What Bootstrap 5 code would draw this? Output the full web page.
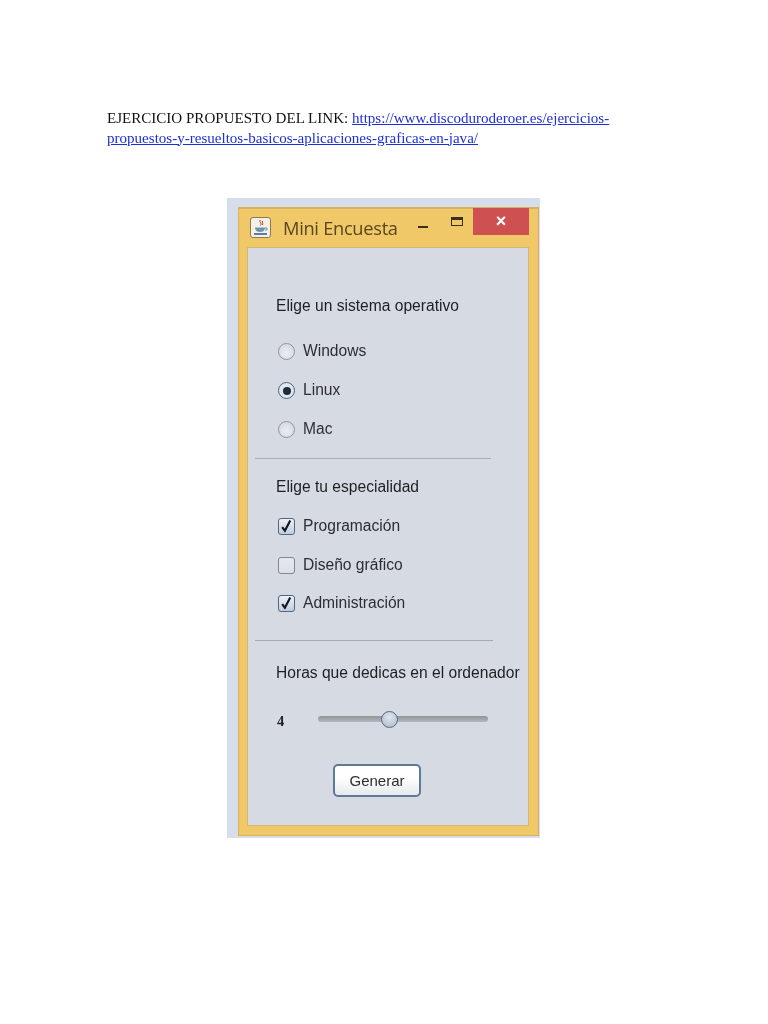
<!DOCTYPE html>
<html lang="es">
<head>
<meta charset="utf-8">
<title>Mini Encuesta</title>
<link href="https://cdn.jsdelivr.net/npm/bootstrap@5.3.0/dist/css/bootstrap.min.css" rel="stylesheet">
<style>
html,body{background:#fff;margin:0}
.doc-page{padding:109px 0 0 107px;width:768px;height:1024px;overflow:hidden}
.doc-text{font:15.05px/19.5px "Liberation Serif",serif;color:#111;width:520px;margin:0;filter:blur(.25px)}
.doc-text a{color:#1c2fd8}
.shot{margin:50px 0 0 120px;width:313px;height:640px;background:#d6dee9;padding:9px 1px 2px 11px;filter:blur(.45px)}
.win-frame{height:629px;background:#f0c868;border:1px solid #d8b35f;border-right-color:#e0a878;border-top-width:2px}
.win-title{height:38px;padding-left:11px;position:relative}
.app-icon{width:21px;height:21px;margin-top:8px;flex:none}
.win-name{font:18.3px/1 "Open Sans",sans-serif;color:#59481f;margin:10px 0 0 12px;letter-spacing:-.3px}
.win-min{position:absolute;left:179px;top:17px;width:10px;height:2px;background:#3a3020}
.win-max{position:absolute;left:212px;top:8px;width:12px;height:9px;border:1px solid #3a3020;border-top-width:3px}
.win-close{position:absolute;left:234px;top:-1px;width:56px;height:27px;background:#cf5050;color:#fff;text-align:center;font:bold 18px/26px "Liberation Sans",sans-serif}
.win-panel{height:579px;margin:0 9px 0 8px;background:#d6dae2;border:1px solid #d2b878;padding-top:39px;font:15.6px/1 "Liberation Sans",sans-serif;color:#2c2e32}
.fila{height:39px;padding-left:28px;display:flex;align-items:center}
.fila-text{margin-bottom:2px}
.fila-head{color:#1d1f22;padding-bottom:2px}
.fila-gap{margin-top:6px}
.fila-up{margin-top:-1px}
.opt{padding-left:30px;gap:8px}
.rb{width:17px;height:17px;border-radius:50%;border:1.5px solid #8f959e;background:radial-gradient(circle at 50% 60%,#eceef1,#cfd3d9);flex:none;display:flex;align-items:center;justify-content:center}
.rb-on{border-color:#4d6480;background:#dfe6ef}
.rb-on::after{content:"";width:8px;height:8px;border-radius:50%;background:#1d2a3c}
.cb{width:17px;height:17px;border-radius:3px;border:1.5px solid #7f8792;background:linear-gradient(#e6e8ec,#dde1e7);flex:none;display:block}
.cb-on{border-color:#4f6581;background:linear-gradient(#eef1f5,#c2cede)}
.sep{height:1px;background:#a9adb3;margin-left:7px}
.sep-1{width:236px;margin-top:9px;margin-bottom:9px}
.sep-2{width:238px;margin-top:17px;margin-bottom:13px}
.hours{white-space:nowrap}
.slide-row{height:50px;padding-left:29px;margin-top:1px;display:flex;align-items:center}
.slide-val{width:41px;font-weight:bold;font-size:14.5px;padding-top:5px;font-family:"Liberation Serif",serif;color:#222}
.track{width:170px;height:6px;border-radius:3px;background:linear-gradient(#8f9499,#b4b8bd);position:relative}
.thumb{position:absolute;left:63px;top:-5px;width:17px;height:17px;border-radius:50%;border:1.5px solid #566a82;background:radial-gradient(circle at 50% 35%,#dfe6ee,#a9b8c9)}
.gen-btn{display:block;margin:20px 0 0 85px;width:88px;height:33px;padding:0;border-radius:5px;border:2px solid #5f7a98;background:linear-gradient(#fff 40%,#e6e8ec);font:15px/1 "Liberation Sans",sans-serif;color:#2c2e32;box-shadow:none}
</style>
</head>
<body>
<div class="doc-page">
  <p class="doc-text">EJERCICIO PROPUESTO DEL LINK: <a href="#">https://www.discoduroderoer.es/ejercicios-</a><br><a href="#">propuestos-y-resueltos-basicos-aplicaciones-graficas-en-java/</a></p>
  <div class="shot">
    <div class="win-frame">
      <div class="win-title d-flex">
        <svg class="app-icon" viewBox="0 0 21 21">
          <rect x=".5" y=".5" width="20" height="20" rx="2.5" fill="#f4f1e6" stroke="#8b7a52"/>
          <path d="M10.500 3c-2 2 2 3 0 5.500M12.500 4c-1 1.500 1 2 0 4" stroke="#c0392b" fill="none"/>
          <path d="M5 10.500h10c0 3-2 4.500-5 4.500s-5-1.500-5-4.500z" fill="#6f93b0"/>
          <path d="M15 11h2v2h-2" stroke="#6f93b0" fill="none"/>
          <rect x="4" y="16" width="13" height="2" fill="#5b7f9f"/>
        </svg>
        <span class="win-name">Mini Encuesta</span>
        <span class="win-min"></span>
        <span class="win-max"></span>
        <span class="win-close">×</span>
      </div>
      <div class="win-panel">
        <div class="fila fila-head">Elige un sistema operativo</div>
        <div class="fila opt fila-gap"><span class="rb"></span><span class="fila-text">Windows</span></div>
        <div class="fila opt"><span class="rb rb-on"></span><span class="fila-text">Linux</span></div>
        <div class="fila opt"><span class="rb"></span><span class="fila-text">Mac</span></div>
        <div class="sep sep-1"></div>
        <div class="fila fila-head">Elige tu especialidad</div>
        <div class="fila opt">
          <svg class="cb cb-on" viewBox="0 0 14 14"><path d="M3 7.500l2.500 3.500L10.500 1.500" fill="none" stroke="#10161f" stroke-width="2"/></svg>
          <span class="fila-text">Programación</span></div>
        <div class="fila opt"><span class="cb"></span><span class="fila-text">Diseño gráfico</span></div>
        <div class="fila opt fila-up">
          <svg class="cb cb-on" viewBox="0 0 14 14"><path d="M3 7.500l2.500 3.500L10.500 1.500" fill="none" stroke="#10161f" stroke-width="2"/></svg>
          <span class="fila-text">Administración</span></div>
        <div class="sep sep-2"></div>
        <div class="fila fila-head hours">Horas que dedicas en el ordenador</div>
        <div class="slide-row"><span class="slide-val">4</span><div class="track"><span class="thumb"></span></div></div>
        <button type="button" class="btn gen-btn">Generar</button>
      </div>
    </div>
  </div>
</div>
<script src="https://cdn.jsdelivr.net/npm/bootstrap@5.3.0/dist/js/bootstrap.bundle.min.js"></script>
</body>
</html>
